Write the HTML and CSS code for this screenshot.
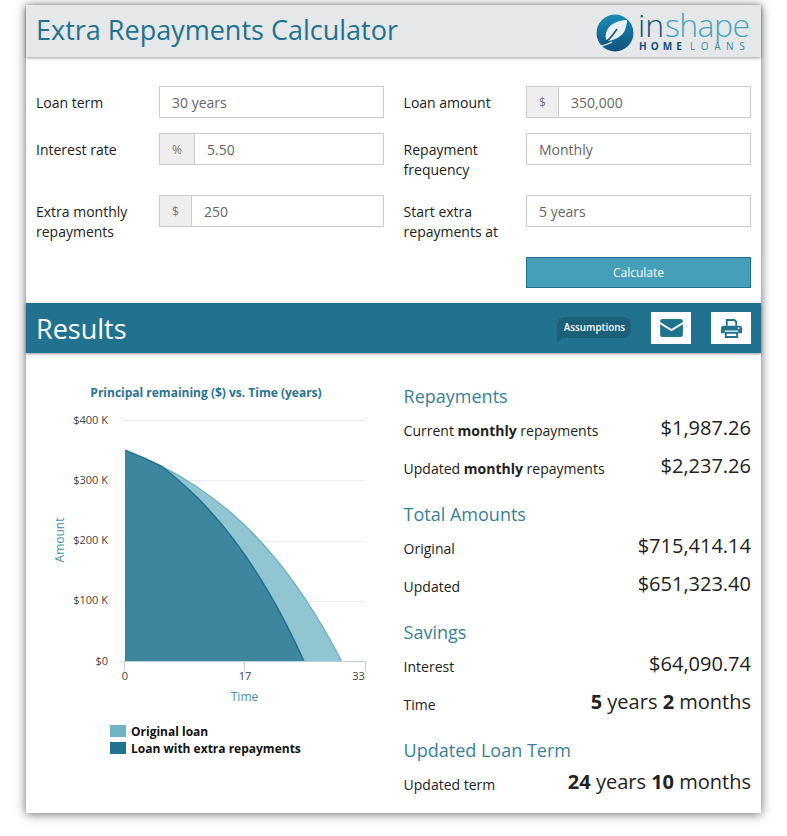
FILE: index.html
```html
<!DOCTYPE html>
<html lang="en">
<head>
<meta charset="utf-8">
<title>Extra Repayments Calculator</title>
<link rel="stylesheet" href="styles.css">
</head>
<body>
<main class="card">
  <header class="top">
    <h1 class="title">Extra Repayments Calculator</h1>
    <svg class="logo" width="156" height="52" viewBox="595 5 156 52" aria-label="In Shape Home Loans">
      <defs>
        <linearGradient id="lg" x1="0" y1="0" x2="0" y2="1">
          <stop offset="0" stop-color="#1a8db3"/>
          <stop offset="1" stop-color="#10507f"/>
        </linearGradient>
        <clipPath id="cutp"><rect x="595" y="5" width="156" height="38"/></clipPath>
      </defs>
      <circle cx="615" cy="33" r="18.500" fill="url(#lg)"/>
      <path d="M627 20C617 20 608 25 606 33C605 37 606 39 607 41C613 41 622 37 625 30C626 27 627 23 627 20Z" fill="#e8f1f5"/>
      <path d="M601 45C607 42 612 37 617 29" fill="none" stroke="#10507f" stroke-width="1.500"/>
      <path d="M601 46C605 45 609 44 612 42" fill="none" stroke="#e8f1f5" stroke-width="1.500"/>
      <text class="logo-in" x="638" y="37">in</text>
      <text class="logo-shape" x="665" y="37" clip-path="url(#cutp)">shape</text>
      <text class="logo-home" x="639" y="50">HOME</text>
      <text class="logo-loans" x="690" y="50">LOANS</text>
    </svg>
  </header>

  <form class="form">
    <label class="lbl">Loan term</label>
    <div class="field"><span class="val">30 years</span></div>
    <label class="lbl lbl-r">Loan amount</label>
    <div class="field"><span class="addon addon-s">$</span><span class="val">350,000</span></div>

    <label class="lbl">Interest rate</label>
    <div class="field"><span class="addon addon-p">%</span><span class="val">5.50</span></div>
    <label class="lbl lbl-r">Repayment frequency</label>
    <div class="field"><span class="val">Monthly</span></div>

    <label class="lbl">Extra monthly repayments</label>
    <div class="field"><span class="addon addon-s">$</span><span class="val">250</span></div>
    <label class="lbl lbl-r">Start extra repayments at</label>
    <div class="field"><span class="val">5 years</span></div>

    <button class="calc" type="button">Calculate</button>
  </form>

  <section class="bar">
    <h2 class="bar-title">Results</h2>
    <span class="bubble">Assumptions</span>
    <span class="iconbox">
      <svg width="23" height="18" viewBox="0 0 24 19"><path d="M2.500 0H21.500A2.500 2.500 0 0 1 24 2.500V3.200L12 10.500L0 3.200V2.500A2.500 2.500 0 0 1 2.500 0Z" fill="#21728f"/><path d="M0 5.600L12 13L24 5.600V16.500A2.500 2.500 0 0 1 21.500 19H2.500A2.500 2.500 0 0 1 0 16.500Z" fill="#21728f"/></svg>
    </span>
    <span class="iconbox">
      <svg width="21" height="19" viewBox="0 0 22 20"><path d="M5 0H14.500L17 2.500V7H15V3.500L13.500 2H7V7H5Z" fill="#21728f"/><path d="M2.500 7H19.500A2.500 2.500 0 0 1 22 9.500V15H18V12H4V15H0V9.500A2.500 2.500 0 0 1 2.500 7Z" fill="#21728f"/><path d="M4 13.500H18V20H4ZM6 15.500V18H16V15.500Z" fill="#21728f" fill-rule="evenodd"/><circle cx="18.500" cy="9.800" r="1" fill="#fff"/></svg>
    </span>
  </section>

  <section class="results">
    <svg class="chart" width="368" height="460" viewBox="26 353 368 460" role="img" aria-label="Principal remaining chart">
      <text class="c-title" x="206" y="397" text-anchor="middle">Principal remaining ($) vs. Time (years)</text>

      <g class="grid">
        <line x1="123" y1="420.500" x2="365" y2="420.500"/>
        <line x1="123" y1="480.500" x2="365" y2="480.500"/>
        <line x1="123" y1="541.500" x2="365" y2="541.500"/>
        <line x1="123" y1="601.500" x2="365" y2="601.500"/>
      </g>

      <path class="a-orig" d="M125 661V450.100C137 454.700 149 459.900 161 466C173 472.100 185 479 197 487C209 495 221 504.100 233 514.600C245 525.100 257 537.100 269 550.900C281 564.700 293 580.500 305 598.700C317 616.900 329 637.100 341.500 661Z"/>
      <path class="l-orig" d="M161 466C173 472.100 185 479 197 487C209 495 221 504.100 233 514.600C245 525.100 257 537.100 269 550.900C281 564.700 293 580.500 305 598.700C317 616.900 329 637.100 341.500 661"/>
      <path class="a-extra" d="M125 661V450.100C137 454.700 149 459.900 161 466C173 475.070 185 485.470 197 497.400C209 509.330 221 523 233 538.700C245 554.400 257 572.330 269 593C280.600 612.970 292.200 635 303.800 661Z"/>
      <path class="l-extra" d="M125 450.100C137 454.700 149 459.900 161 466C173 475.070 185 485.470 197 497.400C209 509.330 221 523 233 538.700C245 554.400 257 572.330 269 593C280.600 612.970 292.200 635 303.800 661"/>

      <g class="axis">
        <line x1="123" y1="661.500" x2="365.500" y2="661.500"/>
        <line x1="124.500" y1="661" x2="124.500" y2="671"/>
        <line x1="244.500" y1="661" x2="244.500" y2="671"/>
        <line x1="365.500" y1="661" x2="365.500" y2="671"/>
      </g>

      <g class="ylab">
        <text x="108" y="424">$400 K</text>
        <text x="108" y="484">$300 K</text>
        <text x="108" y="544">$200 K</text>
        <text x="108" y="604">$100 K</text>
        <text x="108" y="665">$0</text>
      </g>
      <g class="xlab">
        <text x="125" y="680">0</text>
        <text x="245" y="680">17</text>
        <text x="358.500" y="680">33</text>
      </g>
      <text class="ax-name" x="244.500" y="701" text-anchor="middle">Time</text>
      <text class="ax-name" transform="translate(64 540) rotate(-90)" text-anchor="middle">Amount</text>

      <rect x="110" y="725" width="16" height="12" fill="#6fb3c5"/>
      <rect x="110" y="742" width="16" height="12" fill="#21728f"/>
      <text class="leg" x="131" y="736">Original loan</text>
      <text class="leg" x="131" y="753">Loan with extra repayments</text>
    </svg>

    <div class="summary">
      <div class="group">
        <h3 class="g-title">Repayments</h3>
        <div class="row"><span class="r-lbl">Current <b>monthly</b> repayments</span><span class="r-val">$1,987.26</span></div>
        <div class="row"><span class="r-lbl">Updated <b>monthly</b> repayments</span><span class="r-val">$2,237.26</span></div>
      </div>
      <div class="group">
        <h3 class="g-title">Total Amounts</h3>
        <div class="row"><span class="r-lbl">Original</span><span class="r-val">$715,414.14</span></div>
        <div class="row"><span class="r-lbl">Updated</span><span class="r-val">$651,323.40</span></div>
      </div>
      <div class="group">
        <h3 class="g-title">Savings</h3>
        <div class="row"><span class="r-lbl">Interest</span><span class="r-val">$64,090.74</span></div>
        <div class="row"><span class="r-lbl">Time</span><span class="r-val"><b>5</b> years <b>2</b> months</span></div>
      </div>
      <div class="group">
        <h3 class="g-title">Updated Loan Term</h3>
        <div class="row"><span class="r-lbl">Updated term</span><span class="r-val"><b>24</b> years <b>10</b> months</span></div>
      </div>
    </div>
  </section>
</main>
</body>
</html>
```

FILE: styles.css
```css
* { box-sizing: border-box; }
html, body { margin: 0; padding: 0; background: #fff; }
body { font-family: "Open Sans", "Liberation Sans", sans-serif; color: #222; padding: 5px 26px 23px; min-height: 836px; }

.card { width: 735px; background: #fff; box-shadow: 0 1px 10px rgba(0, 0, 0, .6); }

.top { height: 52px; background: #e6e7e8; display: flex; align-items: center; justify-content: space-between; padding: 0 10px; box-shadow: 0 1px 3px rgba(0, 0, 0, .4); position: relative; }
.title { margin: 0 0 2px; font-size: 27px; font-weight: 400; line-height: 50px; color: #21728f; }
.logo { display: block; flex: none; overflow: visible; }
.logo-in { font-family: "Open Sans", sans-serif; font-weight: 300; font-size: 32px; fill: #10507f; }
.logo-shape { font-family: "Open Sans", sans-serif; font-weight: 300; font-size: 32px; letter-spacing: -.6px; fill: #45a5bd; }
.logo-home { font-family: "Open Sans", sans-serif; font-weight: 700; font-size: 10px; letter-spacing: 4.100px; fill: #10507f; }
.logo-loans { font-family: "Open Sans", sans-serif; font-weight: 400; font-size: 10px; letter-spacing: 5.600px; fill: #3a8aa8; }

.form { display: grid; grid-template-columns: 123px 225px 142px 225px; row-gap: 15px; padding: 29px 10px 15px; }
.lbl { font-size: 14px; line-height: 20px; padding-top: 7px; color: #222; }
.lbl-r { margin-left: 19.600px; }
.field { display: flex; height: 32px; border: 1px solid #ccc; background: #fff; font-size: 14px; line-height: 32px; color: #666; }
.val { padding-left: 12px; }
.addon { flex: none; background: #eee; border-right: 1px solid #ccc; text-align: center; font-size: 12px; line-height: 31px; color: #777; }
.addon-s { width: 32px; }
.addon-p { width: 35px; }
.calc { grid-column: 4; height: 31px; background: #459fb8; border: 1px solid #21728f; color: #fff; font-family: inherit; font-size: 12px; padding: 0; }

.bar { height: 50px; background: #21728f; display: flex; align-items: center; padding: 0 10px; box-shadow: 0 1px 3px rgba(0, 0, 0, .4); position: relative; }
.bar-title { margin: 0 auto 0 0; font-size: 27px; font-weight: 400; color: #fff; }
.bubble { position: relative; height: 21px; width: 74px; margin-right: 20px; margin-top: -2px; padding-left: 1px; background: #1b5f78; border-radius: 8px; color: #fff; font-size: 9.800px; font-weight: 600; line-height: 21px; text-align: center; }
.bubble::after { content: ""; position: absolute; left: 0; top: 16px; border-top: 10px solid #1b5f78; border-right: 10px solid transparent; }
.iconbox { width: 40px; height: 32px; background: #fff; display: flex; align-items: center; justify-content: center; }
.iconbox + .iconbox { margin-left: 20px; }

.results { display: flex; height: 460px; }
.chart { display: block; flex: none; }
.c-title { font-size: 12px; font-weight: 700; fill: #2a7490; }
.grid line { stroke: #ececec; stroke-width: 1; }
.axis line { stroke: #c0d0e0; stroke-width: 1; }
.a-orig { fill: #92c5d2; }
.l-orig { fill: none; stroke: #72b4c6; stroke-width: 1.500; }
.a-extra { fill: #3e859e; }
.l-extra { fill: none; stroke: #21728f; stroke-width: 1.500; }
.ylab text { font-size: 11px; text-anchor: end; fill: #444; }
.xlab text { font-size: 11px; text-anchor: middle; fill: #444; }
.ax-name { font-size: 12px; fill: #4d8ea6; }
.leg { font-size: 12px; font-weight: 700; fill: #111; }

.summary { flex: 1; margin-left: 9.600px; padding: 31px 10px 0 0; }
.group { margin-bottom: 16px; }
.g-title { margin: 0 0 2px; font-size: 18px; font-weight: 400; line-height: 24px; color: #3a7f99; }
.row { display: flex; justify-content: space-between; align-items: flex-start; height: 38px; padding-top: 2px; }
.r-lbl { font-size: 14px; line-height: 38px; color: #222; }
.r-val { font-size: 20px; line-height: 32px; color: #222; }
```
